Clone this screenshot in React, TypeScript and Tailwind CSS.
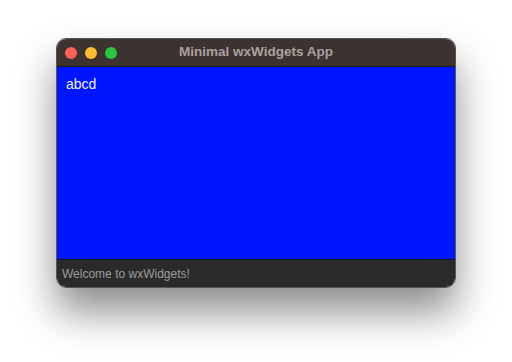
export default function App() {
  return (
    <div className="w-[512px] h-[362px] bg-white pt-[38px] pl-[56px]" style={{ fontFamily: '"Liberation Sans", Arial, sans-serif' }}>
      <div className="w-[400px] h-[250px] rounded-[10px] overflow-hidden flex flex-col border border-[#555] shadow-[0_24px_40px_rgba(0,0,0,0.45)]">
        <div className="relative h-[28px] shrink-0 bg-[#3c3230] border-b border-[#1c1c1c] flex items-center justify-center">
          <div className="absolute left-[8px] top-[8px] flex gap-[8px]">
            <div className="w-[12px] h-[12px] rounded-full bg-[#fe5f57]" />
            <div className="w-[12px] h-[12px] rounded-full bg-[#febc2e]" />
            <div className="w-[12px] h-[12px] rounded-full bg-[#28c840]" />
          </div>
          <span className="text-[13.5px] font-bold text-[#a9a19e]">Minimal wxWidgets App</span>
        </div>
        <div className="flex-1 bg-[#0015ff] px-[9px] pt-[5px]">
          <span className="text-[14px] leading-[16px] text-[#f0f0ff]">abcd</span>
        </div>
        <div className="h-[28px] shrink-0 bg-[#2a2a2a] border-t border-[#1a1a1a] flex items-center px-[5px]">
          <span className="text-[12px] text-[#9c9c9c]">Welcome to wxWidgets!</span>
        </div>
      </div>
    </div>
  );
}
